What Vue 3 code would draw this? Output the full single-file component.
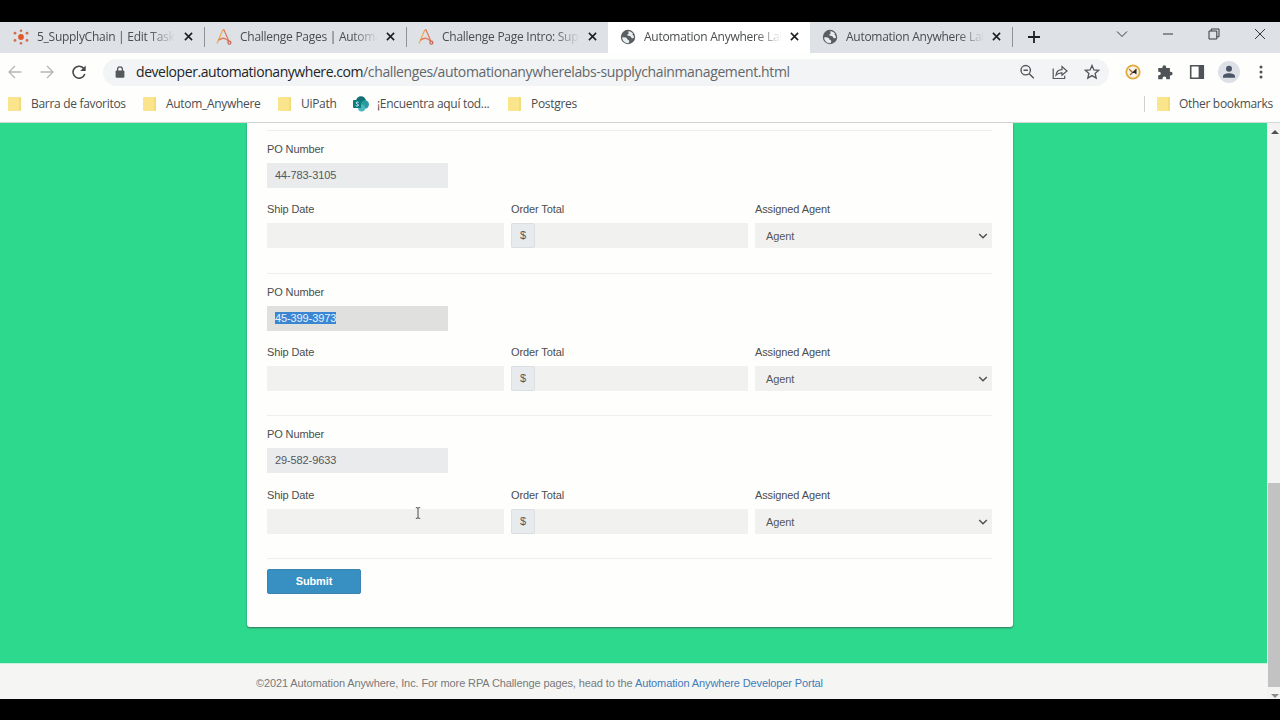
<script setup>
const tabs = [
  { icon: 'dots', title: '5_SupplyChain | Edit Task' },
  { icon: 'aa', title: 'Challenge Pages | Automa' },
  { icon: 'aa', title: 'Challenge Page Intro: Sup' },
  { icon: 'globe', title: 'Automation Anywhere Lab', active: true },
  { icon: 'globe', title: 'Automation Anywhere Lab' },
]
const bookmarks = [
  { title: 'Barra de favoritos', cls: 'b1' },
  { title: 'Autom_Anywhere', cls: 'b2' },
  { title: 'UiPath', cls: 'b3' },
  { title: '¡Encuentra aquí tod...', cls: 'b4', share: true },
  { title: 'Postgres', cls: 'b5' },
]
const orders = [
  { po: '44-783-3105' },
  { po: '45-399-3973', selected: true },
  { po: '29-582-9633' },
]
</script>

<template>
  <div class="screen">
    <header class="tabs">
      <div v-for="(t, i) in tabs" :key="i" class="tab" :class="{ active: t.active, before: i === 2, after: i === 4 }">
        <svg v-if="t.icon === 'dots'" class="fav" viewBox="0 0 16 16">
          <circle cx="8" cy="8" r="2.900" fill="#e2562b" />
          <g fill="#cf6f4c">
            <circle cx="8" cy="1.700" r="1.300" /><circle cx="8" cy="14.300" r="1.300" />
            <circle cx="2" cy="4.200" r="1.400" /><circle cx="14" cy="4.200" r="1.400" />
            <circle cx="2" cy="11.400" r="1.400" /><circle cx="14" cy="11.400" r="1.400" />
          </g>
        </svg>
        <svg v-else-if="t.icon === 'aa'" class="fav" viewBox="0 0 16 16" fill="none" stroke-width="1.200">
          <path d="M1 14.600L6.600 1.200" stroke="#eda94e" />
          <path d="M6.600 1.200L8 1l5 11.600M2.600 11.200c3-2.600 6.200-2.800 9.600.6" stroke="#e2795a" />
          <circle cx="13.400" cy="13.700" r="1.500" stroke="#c9604f" />
        </svg>
        <svg v-else class="fav" viewBox="0 0 16 16">
          <circle cx="8" cy="8" r="7.200" fill="#5a5d61" />
          <path d="M2.100 8.600c1.500-.6 3.400-.5 4.500.3 1 .7.500 1.700 1.900 2 1.100.3 1 1.700-.1 3.300-3.400.2-6.100-2.200-6.300-5.600zM8.300 2.200c1.500-.3 3.700.6 4.700 2.400-.9.500-.6 1.400.6 2.100l.5 1.700c-1.300 1.400-2.700.8-3.100-.5-.4-1.200-2.700-.4-3.500-1.400-.6-.8.300-1.300 1-1.700.900-.4-.8-1.600-.2-2.600z" fill="#e8edef" />
        </svg>
        <span class="title">{{ t.title }}</span>
        <svg class="close" viewBox="0 0 10 10"><path d="M1 1l8 8M9 1L1 9" stroke="#1b1c1e" stroke-width="1.700" /></svg>
      </div>
      <svg class="plus" viewBox="0 0 12 12"><path d="M6 0v12M0 6h12" stroke="#202124" stroke-width="1.800" /></svg>
      <div class="winctl">
        <svg viewBox="0 0 12 12"><path d="M1 3.500l5 5 5-5" /></svg>
        <svg viewBox="0 0 12 12"><path d="M1 6h10" /></svg>
        <svg viewBox="0 0 12 12"><path d="M1 3h7.800v8H1zM3.200 3V1h7.800v7.800H9" /></svg>
        <svg viewBox="0 0 12 12"><path d="M1 1l10 10M11 1L1 11" /></svg>
      </div>
    </header>

    <div class="toolbar">
      <svg class="nav" viewBox="0 0 14 14"><path d="M13.500 7H1M7 1L1 7l6 6" stroke="#b4b6b8" /></svg>
      <svg class="nav" viewBox="0 0 14 14"><path d="M.5 7H13M7 1l6 6-6 6" stroke="#b4b6b8" /></svg>
      <svg class="nav" viewBox="0 0 14 14"><path d="M12 3.800A6 6 0 1 0 12.800 9" stroke="#47494c" stroke-width="1.600" /><path d="M13.700.5v5.500H8.200z" fill="#47494c" stroke="none" /></svg>
      <div class="omnibox">
        <svg class="lock" viewBox="0 0 10 12"><rect x=".6" y="4.500" width="8.800" height="7.200" rx="1" fill="#55585c" /><path d="M2.600 5V3.200a2.400 2.400 0 0 1 4.800 0V5" fill="none" stroke="#55585c" stroke-width="1.300" /></svg>
        <div class="url"><b>developer.automationanywhere.com</b><span>/challenges/automationanywherelabs-supplychainmanagement.html</span></div>
        <div class="acts">
          <svg viewBox="0 0 16 16"><circle cx="6.700" cy="6.200" r="4.700" /><path d="M10.200 9.700l4.600 4.600M4.500 6.200h4.400" /></svg>
          <svg viewBox="0 0 16 16"><path d="M1.200 4.500v10h11.500v-2.800M4 11.200c.4-3.600 2.400-5.400 6-5.500V2.500l5 4.500-5 4.200V8.800c-3-.1-4.500.7-6 2.400z" stroke-width="1.200" /></svg>
          <svg viewBox="0 0 16 16"><path d="M8 1.500l1.900 4.400 4.800.4-3.600 3.100 1.100 4.700L8 11.600l-4.200 2.500 1.100-4.700-3.600-3.100 4.800-.4z" stroke-width="1.300" /></svg>
        </div>
      </div>
      <div class="exts">
        <svg viewBox="0 0 16 16"><circle cx="8" cy="8" r="6.700" fill="#f8f3e5" stroke="#e0aa3d" stroke-width="1.800" /><path d="M4.200 5.300l3.600 3.500M5 11l6.400-6" stroke="#8e6942" stroke-width="1.200" /><path d="M7 9L11.500 5v5.500l-2-1.600z" fill="#242429" /></svg>
        <svg viewBox="0 0 16 16"><path d="M1.200 4h4.200v-.8a1.900 1.900 0 0 1 3.800 0V4h3.700v3.700h.8a1.900 1.900 0 0 1 0 3.800h-.8v3.700H9.300v-.8a1.900 1.900 0 0 0-3.800 0v.8H1.200v-3.900h.8a1.800 1.800 0 0 0 0-3.600h-.8z" fill="#4f5256" /></svg>
        <svg viewBox="0 0 16 16"><path d="M1.700 1.800h12.600v12.400H1.700z" fill="#fff" stroke="#4f5256" stroke-width="1.600" /><path d="M9.600 1.500H15v13H9.600z" fill="#4f5256" /></svg>
        <svg class="avatar" viewBox="0 0 22 22"><circle cx="11" cy="11" r="11" fill="#dde1e7" /><circle cx="11" cy="7.700" r="3" fill="#4b5566" /><path d="M5 16.800v-1.600c0-4 12-4 12 0v1.600z" fill="#4b5566" /></svg>
        <svg viewBox="0 0 16 16" fill="#4f5256"><circle cx="8" cy="3" r="1.500" /><circle cx="8" cy="8" r="1.500" /><circle cx="8" cy="13" r="1.500" /></svg>
      </div>
    </div>

    <nav class="bookmarks">
      <div v-for="b in bookmarks" :key="b.title" class="bm" :class="b.cls">
        <svg v-if="b.share" class="sp" viewBox="0 0 16 16"><circle cx="8" cy="5.200" r="5" fill="#126e70" /><circle cx="11.800" cy="8.500" r="4.200" fill="#299ba0" /><circle cx="8.600" cy="12" r="3.500" fill="#49b7ba" /><rect x="0" y="4" width="8" height="8" rx=".8" fill="#087b80" /><path d="M5.500 6.300c-1.800-.8-3 .4-1.800 1.400 1 .7 2.200.9 1.700 1.800-.5.800-1.800.5-2.700.1" fill="none" stroke="#fff" /></svg>
        <i v-else class="folder"></i>
        <span>{{ b.title }}</span>
      </div>
      <div class="bm other"><i class="folder"></i><span>Other bookmarks</span></div>
    </nav>

    <div class="view">
      <div class="page">
        <main>
          <div class="card">
            <section v-for="o in orders" :key="o.po" class="order">
              <label>PO Number</label>
              <div class="po" :class="{ sel: o.selected }"><span>{{ o.po }}</span></div>
              <div class="fields">
                <div><label>Ship Date</label><div class="field"></div></div>
                <div><label>Order Total</label><div class="field money"><span>$</span></div></div>
                <div><label>Assigned Agent</label><div class="field select"><span>Agent</span><svg viewBox="0 0 10 6"><path d="M1.200 1l3.800 3.800L8.800 1" fill="none" stroke="#505050" stroke-width="1.400" /></svg></div></div>
              </div>
            </section>
            <div class="end"><button>Submit</button></div>
          </div>
        </main>
        <footer><span>©2021 Automation Anywhere, Inc. For more RPA Challenge pages, head to the <a>Automation Anywhere Developer Portal</a></span></footer>
      </div>
      <div class="scroll"><i class="up"></i><i class="thumb"></i><i class="down"></i></div>
      <svg class="caret" viewBox="0 0 6 12"><path d="M.8.7h1.700L3 1.200l.5-.5h1.700M3 1v10M.8 11.300h1.700l.5-.5.5.5h1.700" fill="none" stroke="#4b4b4b" stroke-width="1" /></svg>
    </div>
  </div>
</template>

<style>
body { background: #000; overflow: hidden; }
</style>

<style scoped>
* { box-sizing: border-box; }
svg { display: block; flex: none; }
.screen { width: 1280px; height: 720px; background: #000; padding: 22px 0 21px; display: flex; flex-direction: column; font-family: "Open Sans", "Noto Sans", sans-serif; color: #4b4d4f; }
.tabs { height: 31px; flex: none; background: #dee2e6; display: flex; padding-left: 2px; align-items: stretch; }
.tab { width: 202px; display: flex; align-items: center; padding: 0 9px 2px 11px; position: relative; }
.tab::after { content: ""; position: absolute; right: -1px; top: 5px; height: 20px; width: 1px; background: #8f9397; }
.tab.before::after, .tab.active::after { display: none; }
.tab.active { background: #fefffe; }
.tab.before { border-radius: 0 0 6px 0; }
.fav { width: 16px; height: 16px; margin: 0 8px 0 1px; }
.tab:first-child .fav { margin: 0 8px 0 0; }
.tab:first-child .title { width: 139px; }
.title { width: 138px; white-space: nowrap; font-size: 12px; letter-spacing: -.27px; line-height: 20px; -webkit-mask-image: linear-gradient(90deg, #000 112px, transparent 138px); mask-image: linear-gradient(90deg, #000 112px, transparent 138px); }
.close { width: 9px; height: 9px; margin-left: 8px; }
.plus { width: 12px; height: 12px; margin: 9px 0 0 16px; }
.winctl { margin-left: auto; display: flex; gap: 34px; padding: 6px 14px 0 0; }
.winctl svg { width: 12px; height: 12px; fill: none; stroke: #36383a; stroke-width: 1; }
.toolbar { height: 37px; flex: none; background: #fefffd; display: flex; align-items: center; padding: 1px 11px 0 8px; }
.nav { width: 14px; height: 14px; margin-right: 18px; fill: none; stroke-width: 1.300; }
.omnibox { width: 1006px; height: 27px; margin-left: -1px; background: #f2f4f5; border-radius: 14px; display: flex; align-items: center; padding: 0 9px 0 12px; }
.lock { width: 10px; height: 12px; margin-right: 11px; }
.url { font-size: 14px; line-height: 20px; white-space: nowrap; color: #63676b; letter-spacing: -.37px; }
.url b { font-weight: 400; color: #222427; letter-spacing: -.44px; }
.acts { margin-left: auto; display: flex; gap: 16.500px; }
.acts svg { width: 16px; height: 16px; fill: none; stroke: #53565a; stroke-width: 1.400; }
.exts { margin-left: auto; display: flex; align-items: center; gap: 16px; }
.exts svg { width: 16px; height: 16px; }
.exts svg.avatar { width: 22px; height: 22px; margin: 0 -3px; }
.bookmarks { height: 33px; flex: none; background: #fefffd; border-bottom: 1px solid #d5d8d7; display: flex; align-items: center; padding: 0 0 4px 8px; font-size: 12px; letter-spacing: -.31px; }
.bm { display: flex; align-items: center; white-space: nowrap; line-height: 20px; }
.folder { width: 13px; height: 14px; background: #fae58c; border-radius: 1px; border-right: 2px solid #f3dc78; margin-right: 10px; }
.sp { width: 16px; height: 16px; margin: 0 8px 0 1px; }
.b1 { width: 135px; } .b2 { width: 135px; } .b3 { width: 74px; } .b4 { width: 156px; }
.other { margin-left: auto; width: 136px; border-left: 1px solid #cfd2d1; padding-left: 12px; height: 16px; }
.other .folder { margin-right: 9px; }
.view { flex: 1; display: flex; position: relative; font-family: "Liberation Sans", Arial, sans-serif; font-size: 11px; letter-spacing: -.11px; }
.page { width: 1267px; display: flex; flex-direction: column; }
main { flex: 1; background: #2dda8d; padding-left: 247px; }
.card { width: 766px; height: 504px; background: #fefffc; border-radius: 0 0 3px 3px; box-shadow: 0 1px 2px #37745c; padding: 7px 21px 0 20px; }
.order { height: 142.700px; border-top: 1px solid #ecefed; padding-top: 9px; }
label { display: block; height: 18px; line-height: 18px; margin-bottom: 5px; white-space: nowrap; color: #4b4d4e; }
.po { width: 181px; height: 25px; line-height: 24px; padding-left: 8px; background: #e9ebed; color: #55585b; margin-bottom: 12.200px; }
.po.sel { background: #e0e1df; }
.po.sel span { background: #3b86d2; color: #e5f3ff; }
.fields { display: grid; grid-template-columns: repeat(3, 1fr); gap: 7px; }
.field { height: 25px; background: #f1f2f0; display: flex; align-items: center; color: #55585b; }
.money span { width: 24px; height: 25px; line-height: 23px; text-align: center; background: #e8ebed; border: 1px solid #dcdfe1; border-radius: 2px; }
.select { justify-content: space-between; padding: 1px 4px 0 11px; }
.select svg { width: 10px; height: 6px; }
.end { border-top: 1px solid #ecefed; padding-top: 10.300px; }
button { display: block; width: 94px; height: 25px; border: 1px solid #3984b3; border-radius: 2px; background: #388fc2; color: #fff; font: bold 11px "Liberation Sans", Arial, sans-serif; letter-spacing: -.15px; padding: 0 0 1px; }
footer { height: 36px; background: #f5f6f4; padding: 0 0 0 256px; line-height: 39px; color: #77797a; white-space: nowrap; border-top: 1px solid #c6f3df; }
a { color: #417bb9; }
.scroll { width: 13px; background: #f3f4f2; position: relative; }
.up, .down { position: absolute; left: 4px; border: 4px solid transparent; }
.up { top: 3px; border-bottom-color: #505050; border-top: 0; margin-top: 4px; }
.down { bottom: 1px; border-top-color: #8b8b8b; border-bottom: 0; }
.thumb { position: absolute; left: 1px; right: 0; top: 360px; height: 204px; background: #c1c2c1; }
.caret { position: absolute; left: 415px; top: 384px; width: 6px; height: 12px; }
</style>
